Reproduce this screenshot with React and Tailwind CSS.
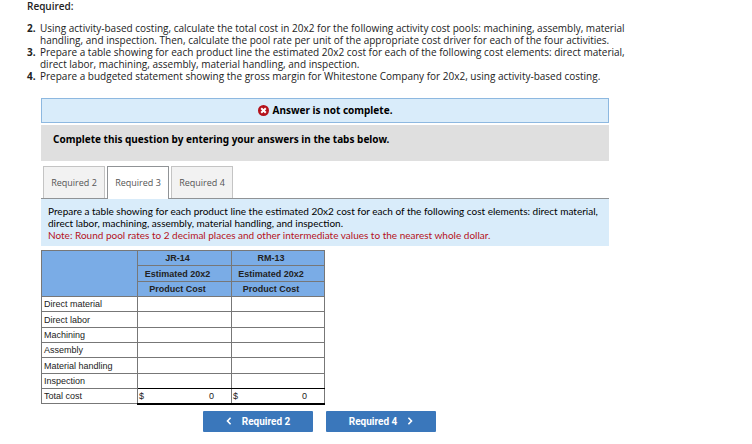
import React from 'react';

const tabs = ['Required 2', 'Required 3', 'Required 4'];
const products = ['JR-14', 'RM-13'];
const costElements = [
  'Direct material',
  'Direct labor',
  'Machining',
  'Assembly',
  'Material handling',
  'Inspection',
];

const requirements = [
  {
    number: 2,
    text: 'Using activity-based costing, calculate the total cost in 20x2 for the following activity cost pools: machining, assembly, material handling, and inspection. Then, calculate the pool rate per unit of the appropriate cost driver for each of the four activities.',
  },
  {
    number: 3,
    text: 'Prepare a table showing for each product line the estimated 20x2 cost for each of the following cost elements: direct material, direct labor, machining, assembly, material handling, and inspection.',
  },
  {
    number: 4,
    text: 'Prepare a budgeted statement showing the gross margin for Whitestone Company for 20x2, using activity-based costing.',
  },
];

function ErrorIcon() {
  return (
    <svg className="h-[11px] w-[11px] shrink-0" viewBox="0 0 11 11" aria-hidden="true">
      <circle cx="5.5" cy="5.5" r="5.5" fill="#b5121b" />
      <path d="M3.2 3.2l4.6 4.6M7.8 3.2L3.2 7.8" stroke="#fff" strokeWidth="2" />
    </svg>
  );
}

function Chevron({ direction }) {
  return (
    <svg className="h-[8px] w-[6px] shrink-0" viewBox="0 0 6 8" fill="none" stroke="#fff" strokeWidth="1.6" aria-hidden="true">
      <path d={direction === 'left' ? 'M4.6 0.8L1.5 4l3.1 3.2' : 'M1.4 0.8L4.5 4L1.4 7.2'} />
    </svg>
  );
}

function Requirements() {
  return (
    <section className="pl-[27px] font-['Open_Sans',sans-serif] text-[10px] leading-[12px] text-[#222]">
      <h1 className="font-semibold">Required:</h1>
      <ol className="mt-[10px] max-w-[604px]">
        {requirements.map((item) => (
          <li key={item.number} className="flex">
            <span className="w-[13px] shrink-0 font-bold">{item.number}.</span>
            <span>{item.text}</span>
          </li>
        ))}
      </ol>
    </section>
  );
}

function CostTable() {
  return (
    <table className="mt-[4px] w-[284px] table-fixed border-collapse font-['Liberation_Sans',Arial,sans-serif] text-[9px] leading-[12px] text-[#222]">
      <colgroup>
        <col className="w-[96px]" />
        <col className="w-[94px]" />
        <col className="w-[93px]" />
      </colgroup>
      <thead className="bg-[#7aace6]">
        <tr className="h-[15px]">
          <td rowSpan={3} className="border border-[#777] p-0" />
          {products.map((name) => (
            <th key={name} className="border border-[#777] p-0 pr-[14px]">{name}</th>
          ))}
        </tr>
        <tr className="h-[16px]">
          {products.map((name) => (
            <th key={name} className="border border-[#777] p-0 pr-[14px]">Estimated 20x2</th>
          ))}
        </tr>
        <tr className="h-[15px]">
          {products.map((name) => (
            <th key={name} className="border border-[#777] p-0 pr-[14px]">Product Cost</th>
          ))}
        </tr>
      </thead>
      <tbody>
        {costElements.map((element) => (
          <tr key={element} className="group h-[15px] nth-[3n+2]:h-[16px]">
            <th className="border border-[#777] p-0 pl-[2px] text-left font-normal">{element}</th>
            {products.map((name) => (
              <td key={name} className="border border-[#777] p-0 group-nth-[6]:border-b-black">
                <input
                  type="text"
                  aria-label={`${element}, ${name}`}
                  className="block h-[12px] w-full px-[2px] text-right outline-none"
                />
              </td>
            ))}
          </tr>
        ))}
        <tr className="h-[15px]">
          <th className="border border-[#777] p-0 pl-[2px] text-left font-normal">Total cost</th>
          {products.map((name) => (
            <td key={name} className="border border-x-[#777] border-t-black border-b-2 border-b-black p-0">
              <div className="flex justify-between pr-[17px] pl-px">
                <span>$</span>
                <span>0</span>
              </div>
            </td>
          ))}
        </tr>
      </tbody>
    </table>
  );
}

export default function App() {
  return (
    <main className="bg-white">
      <Requirements />

      <div className="mt-[16px] ml-[41px] max-w-[568px] font-['Noto_Sans',sans-serif] text-[10px] text-black">
        <div role="status" className="flex h-[25px] items-center justify-center gap-[4px] border border-[#8db8e0] bg-[#d9ecfa] font-bold">
          <ErrorIcon />
          Answer is not complete.
        </div>

        <div className="mt-[2px] bg-[#dfdfdf] px-[12px] pt-[7px] pb-[14px] leading-[15px] font-bold">
          Complete this question by entering your answers in the tabs below.
        </div>

        <div role="tablist" className="mt-[5px] flex gap-[2px] border-b border-[#909396] pl-[2px] font-['Open_Sans',sans-serif] text-[9px] text-[#555]">
          {tabs.map((tab) =>
            tab === 'Required 3' ? (
              <button key={tab} type="button" role="tab" aria-selected="true" className="-mb-px h-[33px] w-[62px] border border-b-0 border-[#909396] bg-white">
                {tab}
              </button>
            ) : (
              <button key={tab} type="button" role="tab" aria-selected="false" className="h-[32px] w-[62px] border border-b-0 border-[#c4c4c4] bg-[#f2f2f2]">
                {tab}
              </button>
            ),
          )}
        </div>

        <div className="bg-[#d9ecfa] px-[7px] pt-[6px] pb-[5px] font-['Lato',sans-serif] leading-[12px]">
          <p>
            Prepare a table showing for each product line the estimated 20x2 cost for each of the following cost elements: direct material,
            direct labor, machining, assembly, material handling, and inspection.
          </p>
          <p className="text-[#b5121b]">
            Note: Round pool rates to 2 decimal places and other intermediate values to the nearest whole dollar.
          </p>
        </div>

        <CostTable />

        <nav className="mt-[6px] ml-[162px] flex gap-[13px] font-['Roboto',sans-serif] text-[10px] font-bold text-white">
          <button type="button" className="flex h-[21px] w-[110px] items-center justify-center gap-[10px] rounded-[1px] bg-[#3a77bb]">
            <Chevron direction="left" />
            Required 2
          </button>
          <button type="button" className="flex h-[21px] w-[110px] items-center justify-center gap-[10px] rounded-[1px] bg-[#3a77bb]">
            Required 4
            <Chevron direction="right" />
          </button>
        </nav>
      </div>
    </main>
  );
}
